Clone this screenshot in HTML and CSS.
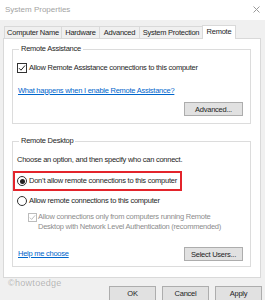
FILE: index.html
```html
<!DOCTYPE html>
<html>
<head>
<meta charset="utf-8">
<link rel="stylesheet" href="styles.css">
</head>
<body>
<div class="window">
  <div class="titlebar">
    <span class="title">System Properties</span>
    <svg class="close" width="7" height="7" viewBox="0 0 7 7"><path d="M0.5 0.5L6.5 6.5M6.5 0.5L0.5 6.5" stroke="#9a9a9a" stroke-width="1"/></svg>
  </div>
  <div class="tabs">
    <div class="tab t1">Computer Name</div>
    <div class="tab t2">Hardware</div>
    <div class="tab t3">Advanced</div>
    <div class="tab t4">System Protection</div>
    <div class="tab t5 active">Remote</div>
  </div>
  <div class="panel">
    <fieldset class="group g1">
      <legend>Remote Assistance</legend>
      <div class="option check-row">
        <span class="checkbox"><svg width="8" height="8" viewBox="0 0 8 8"><path d="M1 4.2L3 6.2L7 1.5" fill="none" stroke="#222" stroke-width="1"/></svg></span>
        <span>Allow Remote Assistance connections to this computer</span>
      </div>
      <a class="link l1" href="#">What happens when I enable Remote Assistance?</a>
      <div class="btn-row r1"><span class="btn">Advanced...</span></div>
    </fieldset>
    <fieldset class="group g2">
      <legend>Remote Desktop</legend>
      <div class="choose">Choose an option, and then specify who can connect.</div>
      <div class="highlight">
        <div class="option"><span class="radio checked"></span><span>Don’t allow remote connections to this computer</span></div>
      </div>
      <div class="option r2"><span class="radio"></span><span>Allow remote connections to this computer</span></div>
      <div class="nla">
        <span class="checkbox disabled"><svg width="7" height="7" viewBox="0 0 8 8"><path d="M1 4.2L3 6.2L7 1.5" fill="none" stroke="#b5b5b5" stroke-width="1"/></svg></span>
        <span class="nla-text">Allow connections only from computers running Remote<br>Desktop with Network Level Authentication (recommended)</span>
      </div>
      <div class="btn-row r3">
        <a class="link" href="#">Help me choose</a>
        <span class="btn">Select Users...</span>
      </div>
    </fieldset>
  </div>
  <div class="footer">
    <span class="watermark">©howtoedge</span>
    <div class="actions">
      <span class="btn fbtn">OK</span>
      <span class="btn fbtn">Cancel</span>
      <span class="btn fbtn">Apply</span>
    </div>
  </div>
</div>
</body>
</html>
```
FILE: styles.css
```css
* { box-sizing: border-box; }
html, body { margin: 0; padding: 0; }
body {
  width: 265px;
  height: 300px;
  overflow: hidden;
  background: #f0f0f0;
  font-family: "Liberation Sans", Arial, sans-serif;
  font-size: 7.5px;
  letter-spacing: -0.25px;
  color: #1e1e1e;
}
.titlebar {
  height: 20px;
  background: #fff;
  display: flex;
  align-items: center;
  justify-content: space-between;
  padding: 0 5px 2px 5px;
}
.title { color: #a3a3a3; font-size: 8px; letter-spacing: 0; }
.tabs {
  display: flex;
  align-items: flex-end;
  height: 18px;
  padding-left: 4px;
}
.tab {
  height: 12px;
  line-height: 11px;
  border: 1px solid #d9d9d9;
  border-bottom: none;
  border-right: none;
  background: #f0f0f0;
  text-align: center;
  white-space: nowrap;
}
.t1 { width: 57px; }
.t2 { width: 38px; }
.t3 { width: 40px; }
.t4 { width: 63px; }
.tab.active {
  width: 34px;
  height: 14px;
  line-height: 12px;
  background: #fff;
  border-right: 1px solid #d9d9d9;
  position: relative;
  margin-bottom: -1px;
  z-index: 1;
}
.panel {
  margin-left: 3px;
  width: 258px;
  height: 240px;
  background: #fff;
  border: 1px solid #d9d9d9;
  padding: 0 9px 0 8px;
}
.group {
  margin: 5px 0 0 0;
  padding: 0 7px 7px 4px;
  border: 1px solid #dcdcdc;
  min-width: 0;
}
.group legend {
  padding: 0 2px;
  margin-left: 2px;
  line-height: 10px;
  height: 10px;
}
.g2 { margin-top: 12px; padding-bottom: 5px; }
.option {
  display: flex;
  align-items: center;
  height: 10px;
  line-height: 10px;
  white-space: nowrap;
}
.check-row { margin-top: 9px; }
.checkbox {
  width: 10px;
  height: 10px;
  border: 1px solid #333;
  display: flex;
  align-items: center;
  justify-content: center;
  margin-right: 2px;
  flex: none;
}
.checkbox.disabled { width: 9px; height: 9px; border-color: #bcbcbc; }
.radio {
  width: 10px;
  height: 10px;
  border: 1px solid #333;
  border-radius: 50%;
  margin-right: 2px;
  display: flex;
  align-items: center;
  justify-content: center;
  flex: none;
}
.radio.checked::after {
  content: "";
  width: 5px;
  height: 5px;
  border-radius: 50%;
  background: #222;
}
.link {
  color: #0066cc;
  text-decoration: underline;
  line-height: 10px;
}
.l1 { display: block; margin-top: 13px; margin-left: 1px; }
.btn-row {
  display: flex;
  justify-content: flex-end;
  align-items: center;
}
.r1 { margin-top: 6px; }
.btn {
  display: flex;
  align-items: center;
  justify-content: center;
  width: 59px;
  height: 14px;
  background: #e1e1e1;
  border: 1px solid #adadad;
  color: #1e1e1e;
}
.choose { margin-top: 9px; line-height: 10px; }
.highlight {
  margin: 6px 0 0 -4px;
  width: 169px;
  height: 20px;
  border: 2px solid #e3242b;
  padding: 3px 0 0 2px;
}
.r2 { margin-top: 5px; }
.nla {
  display: flex;
  align-items: flex-start;
  margin-top: 6px;
  padding-left: 11px;
  color: #8d8d8d;
  line-height: 10px;
}
.nla .checkbox { margin-top: 1px; margin-right: 1px; }
.r3 { margin-top: 15px; justify-content: space-between; padding-left: 1px; }
.footer {
  display: flex;
  align-items: flex-start;
  padding: 0 3px 0 8px;
}
.watermark {
  color: #b4b4b4;
  font-size: 9px;
  line-height: 11px;
  letter-spacing: 0.3px;
  text-shadow: 0 0 1px #fff;
}
.actions {
  margin-left: auto;
  margin-top: 8px;
  display: flex;
  gap: 6px;
}
.fbtn { width: 47px; height: 15px; }
```
